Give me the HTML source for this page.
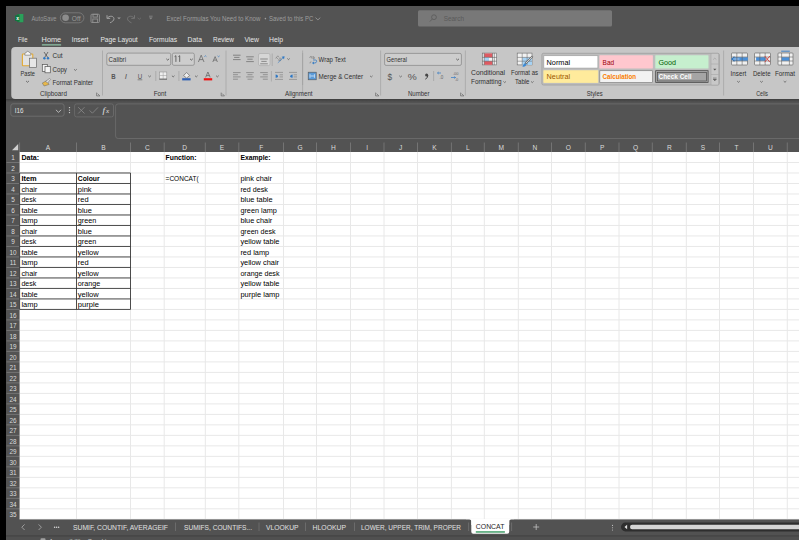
<!DOCTYPE html><html><head><meta charset="utf-8"><style>
*{margin:0;padding:0}
html,body{width:799px;height:540px;overflow:hidden;background:#000}
svg{position:absolute;left:0;top:0;font-family:"Liberation Sans",sans-serif}
</style></head><body>
<svg width="799" height="540" viewBox="0 0 799 540">
<rect x="0" y="0" width="799" height="540" fill="#000"/>
<rect x="6" y="6" width="793" height="534" fill="#535353"/>
<rect x="11.25" y="46.9" width="800" height="52.1" fill="#c6c6c6" rx="4"/>
<rect x="17" y="14" width="6.3" height="8.2" rx="0.8" fill="#1d7a44"/>
<rect x="15" y="15.2" width="5.2" height="5.8" rx="0.6" fill="#12753f"/>
<rect x="19.5" y="14" width="3.8" height="8.2" fill="#2aa05a"/>
<text x="16.2" y="20.3" font-size="5" fill="#fff" font-weight="bold" text-anchor="start">x</text>
<text x="31.5" y="21" font-size="6.3" fill="#9a9a9a" textLength="25" lengthAdjust="spacingAndGlyphs" text-anchor="start">AutoSave</text>
<rect x="60.3" y="12.8" width="23.6" height="10" fill="none" stroke="#7a7a7a" stroke-width="0.9" rx="5"/>
<circle cx="65.6" cy="17.8" r="3.3" fill="#8c8c8c"/>
<text x="71.8" y="21" font-size="6.9" fill="#9a9a9a" textLength="8.7" lengthAdjust="spacingAndGlyphs" text-anchor="start">Off</text>
<g fill="none" stroke="#8e8e8e" stroke-width="1"><rect x="91" y="14.3" width="8.4" height="8.2" rx="0.8"/><rect x="93" y="14.3" width="4.4" height="2.8"/><rect x="92.8" y="19" width="4.8" height="3.5"/></g>
<path d="M107 15.2 v3.2 h3.2 M107.3 18.2 C109 15.5 113.8 15.5 114 18.8 C114 20.5 112 22 110 22.8" fill="none" stroke="#a0a0a0" stroke-width="1"/>
<path d="M117.2 17.6 l1.8 1.6 l1.8 -1.6z" fill="#a0a0a0"/>
<path d="M134.5 15.2 v3.2 h-3.2 M134.2 18.2 C132.5 15.5 127.7 15.5 127.5 18.8 C127.5 20.5 129.5 22 131.5 22.8" fill="none" stroke="#747474" stroke-width="1"/>
<path d="M137.6 17.8 l1.7 1.5 l1.7 -1.5" fill="none" stroke="#747474" stroke-width="0.7"/>
<g stroke="#8a8a8a" stroke-width="0.8"><line x1="149" y1="16.2" x2="152.6" y2="16.2"/></g><path d="M149 17.6 h3.6 l-1.8 1.9z" fill="#8a8a8a"/>
<text x="166.4" y="21.2" font-size="6.5" fill="#9e9e9e" textLength="94" lengthAdjust="spacingAndGlyphs" text-anchor="start">Excel Formulas You Need to Know</text>
<circle cx="265.4" cy="18.6" r="0.8" fill="#9e9e9e"/>
<text x="269" y="21.2" font-size="6.5" fill="#9e9e9e" textLength="44.2" lengthAdjust="spacingAndGlyphs" text-anchor="start">Saved to this PC</text>
<path d="M315.5 17.6 l2.4 2.3 l2.4 -2.3" fill="none" stroke="#9e9e9e" stroke-width="0.8"/>
<rect x="418" y="10.3" width="194" height="16.3" fill="#787878" rx="1.5"/>
<g fill="none" stroke="#5c5c5c" stroke-width="0.9"><circle cx="434" cy="17.2" r="2.4"/><line x1="432.3" y1="19" x2="429.8" y2="21.6"/></g>
<text x="443.7" y="21" font-size="6.3" fill="#5a5a5a" textLength="20.3" lengthAdjust="spacingAndGlyphs" text-anchor="start">Search</text>
<text x="17.9" y="42" font-size="6.9" fill="#e6e6e6" textLength="9.6" lengthAdjust="spacingAndGlyphs" text-anchor="start">File</text>
<text x="41.6" y="42" font-size="6.9" fill="#e6e6e6" textLength="19.6" lengthAdjust="spacingAndGlyphs" text-anchor="start">Home</text>
<text x="71.8" y="42" font-size="6.9" fill="#e6e6e6" textLength="16.6" lengthAdjust="spacingAndGlyphs" text-anchor="start">Insert</text>
<text x="100.4" y="42" font-size="6.9" fill="#e6e6e6" textLength="37.3" lengthAdjust="spacingAndGlyphs" text-anchor="start">Page Layout</text>
<text x="149" y="42" font-size="6.9" fill="#e6e6e6" textLength="28" lengthAdjust="spacingAndGlyphs" text-anchor="start">Formulas</text>
<text x="187.6" y="42" font-size="6.9" fill="#e6e6e6" textLength="14.4" lengthAdjust="spacingAndGlyphs" text-anchor="start">Data</text>
<text x="213" y="42" font-size="6.9" fill="#e6e6e6" textLength="21" lengthAdjust="spacingAndGlyphs" text-anchor="start">Review</text>
<text x="244.4" y="42" font-size="6.9" fill="#e6e6e6" textLength="14.6" lengthAdjust="spacingAndGlyphs" text-anchor="start">View</text>
<text x="269" y="42" font-size="6.9" fill="#e6e6e6" textLength="14" lengthAdjust="spacingAndGlyphs" text-anchor="start">Help</text>
<rect x="41.8" y="44.2" width="19.4" height="1.3" fill="#8fc2a6" rx="0.6"/>
<line x1="102.5" y1="50.5" x2="102.5" y2="95.5" stroke="#a6a6a6" stroke-width="0.8"/>
<line x1="226" y1="50.5" x2="226" y2="95.5" stroke="#a6a6a6" stroke-width="0.8"/>
<line x1="302.6" y1="50.5" x2="302.6" y2="95.5" stroke="#a6a6a6" stroke-width="0.8"/>
<line x1="380.6" y1="50.5" x2="380.6" y2="95.5" stroke="#a6a6a6" stroke-width="0.8"/>
<line x1="465.4" y1="50.5" x2="465.4" y2="95.5" stroke="#a6a6a6" stroke-width="0.8"/>
<line x1="723.6" y1="50.5" x2="723.6" y2="95.5" stroke="#a6a6a6" stroke-width="0.8"/>
<rect x="22.4" y="54" width="10.4" height="11.8" rx="0.6" fill="#e2e2e2" stroke="#e2a935" stroke-width="1.1"/>
<path d="M24.8 55.2 v-1.8 l3 -2.2 l3 2.2 v1.8z" fill="#f4f4f4" stroke="#6a6a6a" stroke-width="0.6"/>
<rect x="29.6" y="58.2" width="6.8" height="9.4" fill="#e6e6e6" stroke="#6a6a6a" stroke-width="0.7"/>
<text x="20.6" y="75.6" font-size="6.6" fill="#303030" textLength="14.4" lengthAdjust="spacingAndGlyphs" text-anchor="start">Paste</text>
<path d="M26 80.9 l1.5 1.4 l1.5 -1.4" fill="none" stroke="#555" stroke-width="0.75"/>
<g fill="none" stroke="#444" stroke-width="0.7"><line x1="44" y1="52" x2="47.8" y2="57.5"/><line x1="48" y1="52" x2="44.6" y2="57.5"/></g><circle cx="44.4" cy="58.3" r="1.2" fill="#2f78c4"/><circle cx="48" cy="58.3" r="1.2" fill="#2f78c4"/>
<text x="52.5" y="58.2" font-size="6.6" fill="#303030" textLength="10" lengthAdjust="spacingAndGlyphs" text-anchor="start">Cut</text>
<g fill="#f4f4f4" stroke="#555" stroke-width="0.7"><rect x="42.3" y="64.6" width="5" height="6.8"/><rect x="45" y="66.6" width="5.3" height="6.2"/></g>
<text x="52.5" y="71.6" font-size="6.6" fill="#303030" textLength="14.4" lengthAdjust="spacingAndGlyphs" text-anchor="start">Copy</text>
<path d="M74 69.2 l1.4 1.3 l1.4 -1.3" fill="none" stroke="#555" stroke-width="0.7"/>
<path d="M42.3 83 l4.3 -2.2 l2.5 3.6 l-5 1.6z" fill="#e8b84a" stroke="#666" stroke-width="0.5"/><path d="M45.6 81.4 l4 -3 l1 1 l-3 3.6z" fill="#ddd" stroke="#666" stroke-width="0.5"/>
<text x="52.5" y="85.2" font-size="6.6" fill="#303030" textLength="40.6" lengthAdjust="spacingAndGlyphs" text-anchor="start">Format Painter</text>
<text x="40" y="96.3" font-size="6.5" fill="#333333" textLength="26.9" lengthAdjust="spacingAndGlyphs" text-anchor="start">Clipboard</text>
<path d="M96.6 92.6 v3.3 h3.3 M97.6 93.6 l2.2 2.2" fill="none" stroke="#555" stroke-width="0.6"/>
<rect x="106.8" y="53.1" width="63.9" height="12.2" fill="#cdcdcd" stroke="#8c8c8c" stroke-width="0.8" rx="1.5"/>
<text x="108.6" y="61.8" font-size="6.5" fill="#333" textLength="17.4" lengthAdjust="spacingAndGlyphs" text-anchor="start">Calibri</text>
<path d="M166.3 58.8 l1.4 1.3 l1.4 -1.3" fill="none" stroke="#444" stroke-width="0.75"/>
<rect x="172.4" y="53.1" width="21.9" height="12.2" fill="#cdcdcd" stroke="#8c8c8c" stroke-width="0.8" rx="1.5"/>
<path d="M174.6 56.6 l1.3 -0.9 v6.2 M178.4 56.6 l1.3 -0.9 v6.2" fill="none" stroke="#3a3a3a" stroke-width="0.7"/>
<path d="M190 58.8 l1.4 1.3 l1.4 -1.3" fill="none" stroke="#444" stroke-width="0.75"/>
<path d="M198.4 62 l2.8 -6.8 l2.8 6.8 M199.5 59.6 h3.4" fill="none" stroke="#555" stroke-width="0.65"/>
<path d="M204.4 56.6 l1 -0.8 l1 0.8" fill="none" stroke="#2f78c4" stroke-width="0.7"/>
<path d="M212.8 62 l2.3 -5.4 l2.3 5.4 M213.7 60.1 h2.8" fill="none" stroke="#555" stroke-width="0.65"/>
<path d="M217.6 55.9 l1 0.8 l1 -0.8" fill="none" stroke="#2f78c4" stroke-width="0.7"/>
<text x="111.2" y="79" font-size="6.8" fill="#555" font-weight="bold" textLength="4.4" lengthAdjust="spacingAndGlyphs" text-anchor="start">B</text>
<text x="124.8" y="79" font-size="6.8" fill="#555" textLength="2.2" lengthAdjust="spacingAndGlyphs" text-anchor="start" font-style="italic">I</text>
<text x="137.7" y="78.5" font-size="6.8" fill="#555" textLength="4.5" lengthAdjust="spacingAndGlyphs" text-anchor="start">U</text>
<line x1="137.6" y1="79.8" x2="142.3" y2="79.8" stroke="#555" stroke-width="0.6"/>
<path d="M148.29999999999998 75.7 l1.3 1.2 l1.3 -1.2" fill="none" stroke="#555" stroke-width="0.75"/>
<path d="M171.89999999999998 75.7 l1.3 1.2 l1.3 -1.2" fill="none" stroke="#555" stroke-width="0.75"/>
<path d="M195.0 75.7 l1.3 1.2 l1.3 -1.2" fill="none" stroke="#555" stroke-width="0.75"/>
<path d="M216.1 75.7 l1.3 1.2 l1.3 -1.2" fill="none" stroke="#555" stroke-width="0.75"/>
<line x1="155.8" y1="71" x2="155.8" y2="81" stroke="#a0a0a0" stroke-width="0.7"/>
<line x1="178.9" y1="71" x2="178.9" y2="81" stroke="#a0a0a0" stroke-width="0.7"/>
<g fill="#eee" stroke="#888" stroke-width="0.5"><rect x="159.6" y="72" width="7.2" height="7"/></g><line x1="163.2" y1="72" x2="163.2" y2="79" stroke="#999" stroke-width="0.5"/><line x1="159.6" y1="75.5" x2="166.8" y2="75.5" stroke="#999" stroke-width="0.5"/><line x1="159.4" y1="79.2" x2="167" y2="79.2" stroke="#555" stroke-width="0.8"/>
<path d="M183.6 75.5 l3 -3 l3 3 l-3 2.6z" fill="#eee" stroke="#555" stroke-width="0.6"/><rect x="182.2" y="78.2" width="8.4" height="2.2" fill="#2e5fb4"/>
<path d="M205.6 77.4 l2.3 -5.4 l2.3 5.4 M206.5 75.6 h2.8" fill="none" stroke="#555" stroke-width="0.65"/>
<rect x="203.8" y="78.2" width="8.4" height="2.2" fill="#f01010"/>
<text x="153.7" y="96.3" font-size="6.5" fill="#333333" textLength="12.6" lengthAdjust="spacingAndGlyphs" text-anchor="start">Font</text>
<path d="M221.2 92.6 v3.3 h3.3 M222.2 93.6 l2.2 2.2" fill="none" stroke="#555" stroke-width="0.6"/>
<line x1="233.0" y1="55.2" x2="240.6" y2="55.2" stroke="#555" stroke-width="0.6"/><line x1="234.14" y1="57.4" x2="239.45999999999998" y2="57.4" stroke="#555" stroke-width="0.6"/><line x1="233.0" y1="59.6" x2="240.6" y2="59.6" stroke="#555" stroke-width="0.6"/>
<line x1="246.2" y1="56.8" x2="253.79999999999998" y2="56.8" stroke="#555" stroke-width="0.6"/><line x1="247.33999999999997" y1="59.2" x2="252.65999999999997" y2="59.2" stroke="#555" stroke-width="0.6"/><line x1="246.2" y1="61.6" x2="253.79999999999998" y2="61.6" stroke="#555" stroke-width="0.6"/>
<rect x="258.5" y="53.5" width="11.5" height="12.1" fill="#d6d6d6" stroke="#a8a8a8" stroke-width="0.6" rx="1.5"/>
<line x1="260.2" y1="59" x2="267.8" y2="59" stroke="#555" stroke-width="0.6"/><line x1="261.34" y1="61.4" x2="266.65999999999997" y2="61.4" stroke="#555" stroke-width="0.6"/><line x1="260.2" y1="63.8" x2="267.8" y2="63.8" stroke="#555" stroke-width="0.6"/>
<line x1="272.2" y1="53.5" x2="272.2" y2="66" stroke="#a0a0a0" stroke-width="0.7"/>
<g fill="none" stroke="#707070" stroke-width="0.55"><path d="M275.6 58.4 l2.2 -2.6 l1.2 1.6 M276.3 57.6 l1.6 1.2"/><path d="M278.4 60.2 l2 -2.4 q1 0.6 0.2 1.4 q1 0.6 -0.2 1.6z"/></g><path d="M277.9 62.8 l5.6 -5.4" stroke="#2f78c4" stroke-width="0.9" stroke-dasharray="1 0.4"/><path d="M284.6 56.2 l-3 0.6 l2.4 2.4z" fill="#2f78c4"/>
<path d="M287.3 58.5 l1.2 1.1 l1.2 -1.1" fill="none" stroke="#555" stroke-width="0.75"/>
<line x1="233" y1="72.6" x2="240.6" y2="72.6" stroke="#7a7a7a" stroke-width="0.7"/><line x1="233" y1="74.7" x2="237.94" y2="74.7" stroke="#7a7a7a" stroke-width="0.7"/><line x1="233" y1="76.9" x2="240.6" y2="76.9" stroke="#7a7a7a" stroke-width="0.7"/><line x1="233" y1="79.2" x2="237.94" y2="79.2" stroke="#7a7a7a" stroke-width="0.7"/>
<line x1="246.2" y1="72.6" x2="253.79999999999998" y2="72.6" stroke="#7a7a7a" stroke-width="0.7"/><line x1="247.53" y1="74.7" x2="252.47" y2="74.7" stroke="#7a7a7a" stroke-width="0.7"/><line x1="246.2" y1="76.9" x2="253.79999999999998" y2="76.9" stroke="#7a7a7a" stroke-width="0.7"/><line x1="247.53" y1="79.2" x2="252.47" y2="79.2" stroke="#7a7a7a" stroke-width="0.7"/>
<line x1="260.2" y1="72.6" x2="267.8" y2="72.6" stroke="#7a7a7a" stroke-width="0.7"/><line x1="262.86" y1="74.7" x2="267.8" y2="74.7" stroke="#7a7a7a" stroke-width="0.7"/><line x1="260.2" y1="76.9" x2="267.8" y2="76.9" stroke="#7a7a7a" stroke-width="0.7"/><line x1="262.86" y1="79.2" x2="267.8" y2="79.2" stroke="#7a7a7a" stroke-width="0.7"/>
<line x1="271.4" y1="71" x2="271.4" y2="81.5" stroke="#a0a0a0" stroke-width="0.7"/>
<g stroke="#8a8a8a" stroke-width="0.75"><line x1="275" y1="72.4" x2="283" y2="72.4"/><line x1="279.6" y1="74.8" x2="283" y2="74.8"/><line x1="279.6" y1="76.9" x2="283" y2="76.9"/><line x1="275" y1="79.4" x2="283" y2="79.4"/></g><path d="M275.6 74.6 q2.4 0 2.4 1.6 q0 1.6 -2.4 1.6z" fill="#2f78c4"/>
<g stroke="#8a8a8a" stroke-width="0.75"><line x1="289" y1="72.4" x2="297" y2="72.4"/><line x1="293.6" y1="74.8" x2="297" y2="74.8"/><line x1="293.6" y1="76.9" x2="297" y2="76.9"/><line x1="289" y1="79.4" x2="297" y2="79.4"/></g><path d="M292.6 74.6 q-2.4 0 -2.4 1.6 q0 1.6 2.4 1.6z" fill="#2f78c4"/>
<line x1="302.6" y1="53" x2="302.6" y2="85" stroke="#a0a0a0" stroke-width="0.7"/>
<g fill="none" stroke="#707070" stroke-width="0.55"><path d="M309.6 58 q0.6 -2.2 1.8 -1.6 v2 M313 56 v3 q1.6 0 1.6 -1.2 q0 -1 -1.6 -0.8"/><path d="M311.4 61.8 q-1.6 -0.3 -1.4 1.6"/></g><path d="M313.2 60 h2.2 q1.4 0 1.2 1.6 q-0.2 1.4 -2 1.4 h-1.4" fill="none" stroke="#2f78c4" stroke-width="0.8"/><path d="M312 63 l1.8 -1.6 v3.2z" fill="#2f78c4"/>
<text x="318.6" y="61.5" font-size="6.6" fill="#303030" textLength="27" lengthAdjust="spacingAndGlyphs" text-anchor="start">Wrap Text</text>
<rect x="308.2" y="72.2" width="8" height="7.6" fill="#5a9ad8" stroke="#555" stroke-width="0.6"/><path d="M310 74.2 v3.6 M314.4 74.2 v3.6 M310.6 76 h3.2" stroke="#f0f6fc" stroke-width="0.7"/>
<text x="318.6" y="78.7" font-size="6.6" fill="#303030" textLength="44.4" lengthAdjust="spacingAndGlyphs" text-anchor="start">Merge &amp; Center</text>
<path d="M370 75.8 l1.3 1.2 l1.3 -1.2" fill="none" stroke="#555" stroke-width="0.7"/>
<text x="285" y="96.3" font-size="6.5" fill="#333333" textLength="27.6" lengthAdjust="spacingAndGlyphs" text-anchor="start">Alignment</text>
<path d="M375.6 92.6 v3.3 h3.3 M376.6 93.6 l2.2 2.2" fill="none" stroke="#555" stroke-width="0.6"/>
<rect x="384.6" y="53.4" width="76.8" height="12" fill="#cdcdcd" stroke="#8c8c8c" stroke-width="0.8" rx="1.5"/>
<text x="386.5" y="61.9" font-size="6.5" fill="#333" textLength="20.5" lengthAdjust="spacingAndGlyphs" text-anchor="start">General</text>
<path d="M456.2 58.8 l1.4 1.3 l1.4 -1.3" fill="none" stroke="#444" stroke-width="0.75"/>
<text x="387.6" y="79.6" font-size="8.6" fill="#555" textLength="4.6" lengthAdjust="spacingAndGlyphs" text-anchor="start">$</text>
<path d="M399.3 75.8 l1.3 1.2 l1.3 -1.2" fill="none" stroke="#555" stroke-width="0.75"/>
<text x="407.8" y="79.8" font-size="8.8" fill="#555" textLength="9" lengthAdjust="spacingAndGlyphs" text-anchor="start">%</text>
<circle cx="426.6" cy="75" r="1.5" fill="#444"/><path d="M427.9 75.2 q0 2.8 -2.6 4" fill="none" stroke="#444" stroke-width="1"/>
<line x1="433.6" y1="71" x2="433.6" y2="81" stroke="#a0a0a0" stroke-width="0.7"/>
<text x="439.5" y="79" font-size="4.5" fill="#666">.0</text><path d="M441 73 h-3.5 m1.2 -1 l-1.2 1 l1.2 1" fill="none" stroke="#2f78c4" stroke-width="0.7"/>
<text x="453" y="75" font-size="4" fill="#666">.00</text><path d="M451 77.5 h4.5 m-1.2 -1 l1.2 1 l-1.2 1" fill="none" stroke="#2f78c4" stroke-width="0.7"/><text x="455" y="80.5" font-size="4" fill="#666">.0</text>
<text x="408" y="96.3" font-size="6.5" fill="#333333" textLength="21.4" lengthAdjust="spacingAndGlyphs" text-anchor="start">Number</text>
<path d="M460.6 92.6 v3.3 h3.3 M461.6 93.6 l2.2 2.2" fill="none" stroke="#555" stroke-width="0.6"/>
<rect x="482.3" y="53.1" width="14.4" height="11.8" fill="#f2f2f2" stroke="#6a6a6a" stroke-width="0.6"/>
<rect x="484.2" y="53.4" width="8.2" height="4" fill="#de5a62"/><rect x="484.2" y="57.4" width="4.8" height="3.8" fill="#a6d3f5"/><rect x="484.2" y="61.2" width="8.2" height="3.6" fill="#de5a62"/>
<g stroke="#5a5a5a" stroke-width="0.55"><line x1="482.3" y1="57.4" x2="496.7" y2="57.4"/><line x1="482.3" y1="61.2" x2="496.7" y2="61.2"/><line x1="484.2" y1="53.1" x2="484.2" y2="64.9"/><line x1="492.5" y1="53.1" x2="492.5" y2="64.9"/><line x1="494.3" y1="53.1" x2="494.3" y2="64.9"/></g>
<text x="471" y="75" font-size="6.6" fill="#303030" textLength="34" lengthAdjust="spacingAndGlyphs" text-anchor="start">Conditional</text>
<text x="471" y="83.6" font-size="6.6" fill="#303030" textLength="30.5" lengthAdjust="spacingAndGlyphs" text-anchor="start">Formatting</text>
<path d="M503.4 81.4 l1.3 1.2 l1.3 -1.2" fill="none" stroke="#555" stroke-width="0.7"/>
<rect x="517.2" y="53.1" width="14.8" height="11.8" fill="#f2f2f2" stroke="#6a6a6a" stroke-width="0.6"/>
<rect x="522.2" y="57.4" width="9.8" height="7.5" fill="#a6d3f5"/>
<g stroke="#6a6a6a" stroke-width="0.55"><line x1="517.2" y1="57.4" x2="532" y2="57.4"/><line x1="517.2" y1="61.2" x2="532" y2="61.2"/><line x1="522.2" y1="53.1" x2="522.2" y2="64.9"/><line x1="527.1" y1="53.1" x2="527.1" y2="64.9"/></g>
<path d="M525.5 63.5 l6.8 -6.8" stroke="#6a6a6a" stroke-width="1.8" stroke-linecap="round"/><path d="M525.8 63.2 l6.5 -6.5" stroke="#e8e8e8" stroke-width="0.8"/><path d="M522.4 66.8 q0.5 -3 3 -3.6 l1 1 q-0.6 2.6 -4 2.6z" fill="#3b8ad6"/>
<text x="511" y="75" font-size="6.6" fill="#303030" textLength="27" lengthAdjust="spacingAndGlyphs" text-anchor="start">Format as</text>
<text x="515" y="83.6" font-size="6.6" fill="#303030" textLength="14.5" lengthAdjust="spacingAndGlyphs" text-anchor="start">Table</text>
<path d="M531 81.4 l1.3 1.2 l1.3 -1.2" fill="none" stroke="#555" stroke-width="0.7"/>
<rect x="541.9" y="53.3" width="177.4" height="31.7" fill="#bdbdbd" stroke="#9a9a9a" stroke-width="0.7" rx="1.5"/>
<rect x="543.8" y="55.7" width="54.1" height="12.4" fill="#ffffff" stroke="#a0a0a0" stroke-width="0.7"/>
<rect x="599.8" y="55.7" width="52.8" height="12.4" fill="#ffc7ce" stroke="#ffc7ce" stroke-width="0.7"/>
<rect x="655.7" y="55.7" width="52.4" height="12.4" fill="#c6efce" stroke="#c6efce" stroke-width="0.7"/>
<rect x="543.8" y="70.7" width="54.1" height="11.9" fill="#ffeb9c" stroke="#ffeb9c" stroke-width="0.7"/>
<rect x="599.8" y="70.7" width="52.8" height="11.9" fill="#f2f2f2" stroke="#7f7f7f" stroke-width="0.7"/>
<rect x="655.7" y="70.7" width="52.4" height="11.9" fill="#a5a5a5" stroke="#3f3f3f" stroke-width="0.7"/>
<text x="546.5999999999999" y="64.7" font-size="6.8" fill="#000" textLength="23.5" lengthAdjust="spacingAndGlyphs" text-anchor="start">Normal</text>
<text x="602.5999999999999" y="64.7" font-size="6.8" fill="#9c0006" textLength="11.5" lengthAdjust="spacingAndGlyphs" text-anchor="start">Bad</text>
<text x="658.5" y="64.7" font-size="6.8" fill="#006100" textLength="17.5" lengthAdjust="spacingAndGlyphs" text-anchor="start">Good</text>
<text x="546.5999999999999" y="79.2" font-size="6.8" fill="#9c5700" textLength="23.5" lengthAdjust="spacingAndGlyphs" text-anchor="start">Neutral</text>
<text x="602.5999999999999" y="79.2" font-size="6.8" fill="#fa7d00" font-weight="bold" textLength="33.5" lengthAdjust="spacingAndGlyphs" text-anchor="start">Calculation</text>
<text x="658.5" y="79.2" font-size="6.8" fill="#ffffff" font-weight="bold" textLength="33" lengthAdjust="spacingAndGlyphs" text-anchor="start">Check Cell</text>
<rect x="657.3" y="72.3" width="49.2" height="8.7" fill="none" stroke="#3f3f3f" stroke-width="0.6"/>
<rect x="711" y="53.4" width="7.6" height="31.6" fill="#c8c8c8" stroke="#a0a0a0" stroke-width="0.5" rx="1"/>
<line x1="711" y1="64" x2="718.6" y2="64" stroke="#a0a0a0" stroke-width="0.5"/>
<line x1="711" y1="74.5" x2="718.6" y2="74.5" stroke="#a0a0a0" stroke-width="0.5"/>
<path d="M713.2 59.6 l1.6 -1.5 l1.6 1.5" fill="none" stroke="#999" stroke-width="0.6"/><path d="M713.2 68.8 h3.2 l-1.6 1.6z" fill="#555"/><path d="M713 78 h3.6 M713.2 79.2 h3.2 l-1.6 1.6z" stroke="#555" stroke-width="0.5" fill="#555"/>
<text x="586.7" y="96.3" font-size="6.5" fill="#333333" textLength="15.9" lengthAdjust="spacingAndGlyphs" text-anchor="start">Styles</text>
<rect x="731.5" y="53" width="16" height="12" fill="#f0f0f0" stroke="#5a5a5a" stroke-width="0.6" rx="0.8"/><rect x="734.0" y="57.2" width="13.8" height="3.6" fill="#4a90d9"/><path d="M731.0 59 l3.4 -3 v6z" fill="#2f78c4"/><line x1="733.0" y1="59" x2="739.5" y2="59" stroke="#d8e8f8" stroke-width="0.7"/><g stroke="#5a5a5a" stroke-width="0.55"><line x1="731.5" y1="57" x2="747.5" y2="57"/><line x1="731.5" y1="61" x2="747.5" y2="61"/><line x1="736.8333333333334" y1="53" x2="736.8333333333334" y2="65"/><line x1="742.1666666666666" y1="53" x2="742.1666666666666" y2="65"/></g>
<rect x="754.5" y="53" width="16" height="12" fill="#f0f0f0" stroke="#5a5a5a" stroke-width="0.6" rx="0.8"/><rect x="756.1" y="57.2" width="9.5" height="3.6" fill="#4a90d9"/><g stroke="#5a5a5a" stroke-width="0.55"><line x1="754.5" y1="57" x2="770.5" y2="57"/><line x1="754.5" y1="61" x2="770.5" y2="61"/><line x1="759.8333333333334" y1="53" x2="759.8333333333334" y2="65"/><line x1="765.1666666666666" y1="53" x2="765.1666666666666" y2="65"/></g><path d="M764.7 56 l5.2 6.2 M769.9 56 l-5.2 6.2" stroke="#d04040" stroke-width="0.9"/>
<rect x="778" y="53" width="15" height="12" fill="#f0f0f0" stroke="#5a5a5a" stroke-width="0.6" rx="0.8"/><rect x="781.6" y="57.2" width="7.8" height="3.6" fill="#4a90d9"/><line x1="781.2" y1="51.2" x2="789.8" y2="51.2" stroke="#2f78c4" stroke-width="0.9"/><g stroke="#5a5a5a" stroke-width="0.55"><line x1="778" y1="57" x2="793" y2="57"/><line x1="778" y1="61" x2="793" y2="61"/><line x1="781.6" y1="53" x2="781.6" y2="65"/><line x1="789.4" y1="53" x2="789.4" y2="65"/></g>
<text x="730.6" y="75.5" font-size="6.6" fill="#303030" textLength="15.6" lengthAdjust="spacingAndGlyphs" text-anchor="start">Insert</text>
<text x="753" y="75.5" font-size="6.6" fill="#303030" textLength="17.5" lengthAdjust="spacingAndGlyphs" text-anchor="start">Delete</text>
<text x="775" y="75.5" font-size="6.6" fill="#303030" textLength="20" lengthAdjust="spacingAndGlyphs" text-anchor="start">Format</text>
<path d="M737.2 81.1 l1.3 1.2 l1.3 -1.2" fill="none" stroke="#555" stroke-width="0.75"/>
<path d="M760.2 81.1 l1.3 1.2 l1.3 -1.2" fill="none" stroke="#555" stroke-width="0.75"/>
<path d="M783.7 81.1 l1.3 1.2 l1.3 -1.2" fill="none" stroke="#555" stroke-width="0.75"/>
<text x="756.2" y="96.3" font-size="6.5" fill="#333333" textLength="11.8" lengthAdjust="spacingAndGlyphs" text-anchor="start">Cells</text>
<defs><linearGradient id="sh" x1="0" y1="0" x2="0" y2="1"><stop offset="0" stop-color="#3e3e3e"/><stop offset="1" stop-color="#535353"/></linearGradient></defs>
<rect x="6" y="99" width="793" height="3.2" fill="url(#sh)"/>
<rect x="10.8" y="103.8" width="53.3" height="12.4" fill="none" stroke="#6f6f6f" stroke-width="0.9" rx="2.2"/>
<text x="14.8" y="112.6" font-size="6.3" fill="#e0e0e0" textLength="8.8" lengthAdjust="spacingAndGlyphs" text-anchor="start">I16</text>
<path d="M55.9 109.8 l2.6 2.6 l2.6 -2.6" fill="none" stroke="#cfcfcf" stroke-width="0.8"/>
<circle cx="69.5" cy="107.6" r="0.7" fill="#dadada"/>
<circle cx="69.5" cy="110.1" r="0.7" fill="#dadada"/>
<circle cx="69.5" cy="112.6" r="0.7" fill="#dadada"/>
<rect x="74.6" y="103.9" width="38.9" height="13" fill="none" stroke="#6f6f6f" stroke-width="0.8" rx="2"/>
<path d="M78.2 107.2 l6.3 6.3 M84.5 107.2 l-6.3 6.3" stroke="#8a8a8a" stroke-width="0.8"/><path d="M89.6 110.4 l2.8 2.8 l5.6 -5.8" fill="none" stroke="#8a8a8a" stroke-width="0.8"/>
<text x="102.6" y="113.2" font-size="9.2" fill="#e6e6e6" font-family="Liberation Serif" font-style="italic">f</text><text x="106" y="113.2" font-size="7" fill="#e6e6e6" font-family="Liberation Serif" font-style="italic">x</text>
<rect x="115.6" y="103.9" width="700" height="34.6" fill="none" stroke="#6f6f6f" stroke-width="0.8" rx="2.5"/>
<rect x="19.6" y="152.0" width="780.4" height="367.325" fill="#ffffff"/>
<line x1="19.6" y1="162.495" x2="800" y2="162.495" stroke="#e8e8e8" stroke-width="1"/>
<line x1="19.6" y1="172.99" x2="800" y2="172.99" stroke="#e8e8e8" stroke-width="1"/>
<line x1="19.6" y1="183.485" x2="800" y2="183.485" stroke="#e8e8e8" stroke-width="1"/>
<line x1="19.6" y1="193.98" x2="800" y2="193.98" stroke="#e8e8e8" stroke-width="1"/>
<line x1="19.6" y1="204.475" x2="800" y2="204.475" stroke="#e8e8e8" stroke-width="1"/>
<line x1="19.6" y1="214.97" x2="800" y2="214.97" stroke="#e8e8e8" stroke-width="1"/>
<line x1="19.6" y1="225.46499999999997" x2="800" y2="225.46499999999997" stroke="#e8e8e8" stroke-width="1"/>
<line x1="19.6" y1="235.95999999999998" x2="800" y2="235.95999999999998" stroke="#e8e8e8" stroke-width="1"/>
<line x1="19.6" y1="246.45499999999998" x2="800" y2="246.45499999999998" stroke="#e8e8e8" stroke-width="1"/>
<line x1="19.6" y1="256.95" x2="800" y2="256.95" stroke="#e8e8e8" stroke-width="1"/>
<line x1="19.6" y1="267.445" x2="800" y2="267.445" stroke="#e8e8e8" stroke-width="1"/>
<line x1="19.6" y1="277.94" x2="800" y2="277.94" stroke="#e8e8e8" stroke-width="1"/>
<line x1="19.6" y1="288.435" x2="800" y2="288.435" stroke="#e8e8e8" stroke-width="1"/>
<line x1="19.6" y1="298.92999999999995" x2="800" y2="298.92999999999995" stroke="#e8e8e8" stroke-width="1"/>
<line x1="19.6" y1="309.42499999999995" x2="800" y2="309.42499999999995" stroke="#e8e8e8" stroke-width="1"/>
<line x1="19.6" y1="319.91999999999996" x2="800" y2="319.91999999999996" stroke="#e8e8e8" stroke-width="1"/>
<line x1="19.6" y1="330.41499999999996" x2="800" y2="330.41499999999996" stroke="#e8e8e8" stroke-width="1"/>
<line x1="19.6" y1="340.90999999999997" x2="800" y2="340.90999999999997" stroke="#e8e8e8" stroke-width="1"/>
<line x1="19.6" y1="351.405" x2="800" y2="351.405" stroke="#e8e8e8" stroke-width="1"/>
<line x1="19.6" y1="361.9" x2="800" y2="361.9" stroke="#e8e8e8" stroke-width="1"/>
<line x1="19.6" y1="372.395" x2="800" y2="372.395" stroke="#e8e8e8" stroke-width="1"/>
<line x1="19.6" y1="382.89" x2="800" y2="382.89" stroke="#e8e8e8" stroke-width="1"/>
<line x1="19.6" y1="393.385" x2="800" y2="393.385" stroke="#e8e8e8" stroke-width="1"/>
<line x1="19.6" y1="403.88" x2="800" y2="403.88" stroke="#e8e8e8" stroke-width="1"/>
<line x1="19.6" y1="414.375" x2="800" y2="414.375" stroke="#e8e8e8" stroke-width="1"/>
<line x1="19.6" y1="424.87" x2="800" y2="424.87" stroke="#e8e8e8" stroke-width="1"/>
<line x1="19.6" y1="435.36499999999995" x2="800" y2="435.36499999999995" stroke="#e8e8e8" stroke-width="1"/>
<line x1="19.6" y1="445.85999999999996" x2="800" y2="445.85999999999996" stroke="#e8e8e8" stroke-width="1"/>
<line x1="19.6" y1="456.35499999999996" x2="800" y2="456.35499999999996" stroke="#e8e8e8" stroke-width="1"/>
<line x1="19.6" y1="466.84999999999997" x2="800" y2="466.84999999999997" stroke="#e8e8e8" stroke-width="1"/>
<line x1="19.6" y1="477.34499999999997" x2="800" y2="477.34499999999997" stroke="#e8e8e8" stroke-width="1"/>
<line x1="19.6" y1="487.84" x2="800" y2="487.84" stroke="#e8e8e8" stroke-width="1"/>
<line x1="19.6" y1="498.335" x2="800" y2="498.335" stroke="#e8e8e8" stroke-width="1"/>
<line x1="19.6" y1="508.83" x2="800" y2="508.83" stroke="#e8e8e8" stroke-width="1"/>
<line x1="19.6" y1="519.325" x2="800" y2="519.325" stroke="#e8e8e8" stroke-width="1"/>
<line x1="76.5" y1="152.0" x2="76.5" y2="519.325" stroke="#e8e8e8" stroke-width="1"/>
<line x1="130.5" y1="152.0" x2="130.5" y2="519.325" stroke="#e8e8e8" stroke-width="1"/>
<line x1="164.2" y1="152.0" x2="164.2" y2="519.325" stroke="#e8e8e8" stroke-width="1"/>
<line x1="205.3" y1="152.0" x2="205.3" y2="519.325" stroke="#e8e8e8" stroke-width="1"/>
<line x1="238.8" y1="152.0" x2="238.8" y2="519.325" stroke="#e8e8e8" stroke-width="1"/>
<line x1="283.5" y1="152.0" x2="283.5" y2="519.325" stroke="#e8e8e8" stroke-width="1"/>
<line x1="316.5" y1="152.0" x2="316.5" y2="519.325" stroke="#e8e8e8" stroke-width="1"/>
<line x1="350.5" y1="152.0" x2="350.5" y2="519.325" stroke="#e8e8e8" stroke-width="1"/>
<line x1="384" y1="152.0" x2="384" y2="519.325" stroke="#e8e8e8" stroke-width="1"/>
<line x1="417.5" y1="152.0" x2="417.5" y2="519.325" stroke="#e8e8e8" stroke-width="1"/>
<line x1="451.4" y1="152.0" x2="451.4" y2="519.325" stroke="#e8e8e8" stroke-width="1"/>
<line x1="484.3" y1="152.0" x2="484.3" y2="519.325" stroke="#e8e8e8" stroke-width="1"/>
<line x1="518.3" y1="152.0" x2="518.3" y2="519.325" stroke="#e8e8e8" stroke-width="1"/>
<line x1="551.5" y1="152.0" x2="551.5" y2="519.325" stroke="#e8e8e8" stroke-width="1"/>
<line x1="585.3" y1="152.0" x2="585.3" y2="519.325" stroke="#e8e8e8" stroke-width="1"/>
<line x1="619" y1="152.0" x2="619" y2="519.325" stroke="#e8e8e8" stroke-width="1"/>
<line x1="652.3" y1="152.0" x2="652.3" y2="519.325" stroke="#e8e8e8" stroke-width="1"/>
<line x1="686.3" y1="152.0" x2="686.3" y2="519.325" stroke="#e8e8e8" stroke-width="1"/>
<line x1="719.5" y1="152.0" x2="719.5" y2="519.325" stroke="#e8e8e8" stroke-width="1"/>
<line x1="753.5" y1="152.0" x2="753.5" y2="519.325" stroke="#e8e8e8" stroke-width="1"/>
<line x1="787.25" y1="152.0" x2="787.25" y2="519.325" stroke="#e8e8e8" stroke-width="1"/>
<line x1="821" y1="152.0" x2="821" y2="519.325" stroke="#e8e8e8" stroke-width="1"/>
<line x1="19.6" y1="142.5" x2="19.6" y2="152" stroke="#7c7c7c" stroke-width="0.8"/>
<line x1="76.5" y1="142.5" x2="76.5" y2="152" stroke="#7c7c7c" stroke-width="0.8"/>
<line x1="130.5" y1="142.5" x2="130.5" y2="152" stroke="#7c7c7c" stroke-width="0.8"/>
<line x1="164.2" y1="142.5" x2="164.2" y2="152" stroke="#7c7c7c" stroke-width="0.8"/>
<line x1="205.3" y1="142.5" x2="205.3" y2="152" stroke="#7c7c7c" stroke-width="0.8"/>
<line x1="238.8" y1="142.5" x2="238.8" y2="152" stroke="#7c7c7c" stroke-width="0.8"/>
<line x1="283.5" y1="142.5" x2="283.5" y2="152" stroke="#7c7c7c" stroke-width="0.8"/>
<line x1="316.5" y1="142.5" x2="316.5" y2="152" stroke="#7c7c7c" stroke-width="0.8"/>
<line x1="350.5" y1="142.5" x2="350.5" y2="152" stroke="#7c7c7c" stroke-width="0.8"/>
<line x1="384" y1="142.5" x2="384" y2="152" stroke="#7c7c7c" stroke-width="0.8"/>
<line x1="417.5" y1="142.5" x2="417.5" y2="152" stroke="#7c7c7c" stroke-width="0.8"/>
<line x1="451.4" y1="142.5" x2="451.4" y2="152" stroke="#7c7c7c" stroke-width="0.8"/>
<line x1="484.3" y1="142.5" x2="484.3" y2="152" stroke="#7c7c7c" stroke-width="0.8"/>
<line x1="518.3" y1="142.5" x2="518.3" y2="152" stroke="#7c7c7c" stroke-width="0.8"/>
<line x1="551.5" y1="142.5" x2="551.5" y2="152" stroke="#7c7c7c" stroke-width="0.8"/>
<line x1="585.3" y1="142.5" x2="585.3" y2="152" stroke="#7c7c7c" stroke-width="0.8"/>
<line x1="619" y1="142.5" x2="619" y2="152" stroke="#7c7c7c" stroke-width="0.8"/>
<line x1="652.3" y1="142.5" x2="652.3" y2="152" stroke="#7c7c7c" stroke-width="0.8"/>
<line x1="686.3" y1="142.5" x2="686.3" y2="152" stroke="#7c7c7c" stroke-width="0.8"/>
<line x1="719.5" y1="142.5" x2="719.5" y2="152" stroke="#7c7c7c" stroke-width="0.8"/>
<line x1="753.5" y1="142.5" x2="753.5" y2="152" stroke="#7c7c7c" stroke-width="0.8"/>
<line x1="787.25" y1="142.5" x2="787.25" y2="152" stroke="#7c7c7c" stroke-width="0.8"/>
<line x1="821" y1="142.5" x2="821" y2="152" stroke="#7c7c7c" stroke-width="0.8"/>
<line x1="6.5" y1="162.495" x2="19.5" y2="162.495" stroke="#7c7c7c" stroke-width="0.8"/>
<line x1="6.5" y1="172.99" x2="19.5" y2="172.99" stroke="#7c7c7c" stroke-width="0.8"/>
<line x1="6.5" y1="183.485" x2="19.5" y2="183.485" stroke="#7c7c7c" stroke-width="0.8"/>
<line x1="6.5" y1="193.98" x2="19.5" y2="193.98" stroke="#7c7c7c" stroke-width="0.8"/>
<line x1="6.5" y1="204.475" x2="19.5" y2="204.475" stroke="#7c7c7c" stroke-width="0.8"/>
<line x1="6.5" y1="214.97" x2="19.5" y2="214.97" stroke="#7c7c7c" stroke-width="0.8"/>
<line x1="6.5" y1="225.46499999999997" x2="19.5" y2="225.46499999999997" stroke="#7c7c7c" stroke-width="0.8"/>
<line x1="6.5" y1="235.95999999999998" x2="19.5" y2="235.95999999999998" stroke="#7c7c7c" stroke-width="0.8"/>
<line x1="6.5" y1="246.45499999999998" x2="19.5" y2="246.45499999999998" stroke="#7c7c7c" stroke-width="0.8"/>
<line x1="6.5" y1="256.95" x2="19.5" y2="256.95" stroke="#7c7c7c" stroke-width="0.8"/>
<line x1="6.5" y1="267.445" x2="19.5" y2="267.445" stroke="#7c7c7c" stroke-width="0.8"/>
<line x1="6.5" y1="277.94" x2="19.5" y2="277.94" stroke="#7c7c7c" stroke-width="0.8"/>
<line x1="6.5" y1="288.435" x2="19.5" y2="288.435" stroke="#7c7c7c" stroke-width="0.8"/>
<line x1="6.5" y1="298.92999999999995" x2="19.5" y2="298.92999999999995" stroke="#7c7c7c" stroke-width="0.8"/>
<line x1="6.5" y1="309.42499999999995" x2="19.5" y2="309.42499999999995" stroke="#7c7c7c" stroke-width="0.8"/>
<line x1="6.5" y1="319.91999999999996" x2="19.5" y2="319.91999999999996" stroke="#7c7c7c" stroke-width="0.8"/>
<line x1="6.5" y1="330.41499999999996" x2="19.5" y2="330.41499999999996" stroke="#7c7c7c" stroke-width="0.8"/>
<line x1="6.5" y1="340.90999999999997" x2="19.5" y2="340.90999999999997" stroke="#7c7c7c" stroke-width="0.8"/>
<line x1="6.5" y1="351.405" x2="19.5" y2="351.405" stroke="#7c7c7c" stroke-width="0.8"/>
<line x1="6.5" y1="361.9" x2="19.5" y2="361.9" stroke="#7c7c7c" stroke-width="0.8"/>
<line x1="6.5" y1="372.395" x2="19.5" y2="372.395" stroke="#7c7c7c" stroke-width="0.8"/>
<line x1="6.5" y1="382.89" x2="19.5" y2="382.89" stroke="#7c7c7c" stroke-width="0.8"/>
<line x1="6.5" y1="393.385" x2="19.5" y2="393.385" stroke="#7c7c7c" stroke-width="0.8"/>
<line x1="6.5" y1="403.88" x2="19.5" y2="403.88" stroke="#7c7c7c" stroke-width="0.8"/>
<line x1="6.5" y1="414.375" x2="19.5" y2="414.375" stroke="#7c7c7c" stroke-width="0.8"/>
<line x1="6.5" y1="424.87" x2="19.5" y2="424.87" stroke="#7c7c7c" stroke-width="0.8"/>
<line x1="6.5" y1="435.36499999999995" x2="19.5" y2="435.36499999999995" stroke="#7c7c7c" stroke-width="0.8"/>
<line x1="6.5" y1="445.85999999999996" x2="19.5" y2="445.85999999999996" stroke="#7c7c7c" stroke-width="0.8"/>
<line x1="6.5" y1="456.35499999999996" x2="19.5" y2="456.35499999999996" stroke="#7c7c7c" stroke-width="0.8"/>
<line x1="6.5" y1="466.84999999999997" x2="19.5" y2="466.84999999999997" stroke="#7c7c7c" stroke-width="0.8"/>
<line x1="6.5" y1="477.34499999999997" x2="19.5" y2="477.34499999999997" stroke="#7c7c7c" stroke-width="0.8"/>
<line x1="6.5" y1="487.84" x2="19.5" y2="487.84" stroke="#7c7c7c" stroke-width="0.8"/>
<line x1="6.5" y1="498.335" x2="19.5" y2="498.335" stroke="#7c7c7c" stroke-width="0.8"/>
<line x1="6.5" y1="508.83" x2="19.5" y2="508.83" stroke="#7c7c7c" stroke-width="0.8"/>
<path d="M18.2 144.1 V150.2 H12 z" fill="#d0d0d0"/>
<text x="48.05" y="149.8" font-size="6.6" fill="#dcdcdc" text-anchor="middle">A</text>
<text x="103.5" y="149.8" font-size="6.6" fill="#dcdcdc" text-anchor="middle">B</text>
<text x="147.35" y="149.8" font-size="6.6" fill="#dcdcdc" text-anchor="middle">C</text>
<text x="184.75" y="149.8" font-size="6.6" fill="#dcdcdc" text-anchor="middle">D</text>
<text x="222.05" y="149.8" font-size="6.6" fill="#dcdcdc" text-anchor="middle">E</text>
<text x="261.15" y="149.8" font-size="6.6" fill="#dcdcdc" text-anchor="middle">F</text>
<text x="300.0" y="149.8" font-size="6.6" fill="#dcdcdc" text-anchor="middle">G</text>
<text x="333.5" y="149.8" font-size="6.6" fill="#dcdcdc" text-anchor="middle">H</text>
<text x="367.25" y="149.8" font-size="6.6" fill="#dcdcdc" text-anchor="middle">I</text>
<text x="400.75" y="149.8" font-size="6.6" fill="#dcdcdc" text-anchor="middle">J</text>
<text x="434.45" y="149.8" font-size="6.6" fill="#dcdcdc" text-anchor="middle">K</text>
<text x="467.85" y="149.8" font-size="6.6" fill="#dcdcdc" text-anchor="middle">L</text>
<text x="501.29999999999995" y="149.8" font-size="6.6" fill="#dcdcdc" text-anchor="middle">M</text>
<text x="534.9" y="149.8" font-size="6.6" fill="#dcdcdc" text-anchor="middle">N</text>
<text x="568.4" y="149.8" font-size="6.6" fill="#dcdcdc" text-anchor="middle">O</text>
<text x="602.15" y="149.8" font-size="6.6" fill="#dcdcdc" text-anchor="middle">P</text>
<text x="635.65" y="149.8" font-size="6.6" fill="#dcdcdc" text-anchor="middle">Q</text>
<text x="669.3" y="149.8" font-size="6.6" fill="#dcdcdc" text-anchor="middle">R</text>
<text x="702.9" y="149.8" font-size="6.6" fill="#dcdcdc" text-anchor="middle">S</text>
<text x="736.5" y="149.8" font-size="6.6" fill="#dcdcdc" text-anchor="middle">T</text>
<text x="770.375" y="149.8" font-size="6.6" fill="#dcdcdc" text-anchor="middle">U</text>
<text x="804.125" y="149.8" font-size="6.6" fill="#dcdcdc" text-anchor="middle">V</text>
<text x="13" y="160.2" font-size="6.4" fill="#dcdcdc" text-anchor="middle">1</text>
<text x="13" y="170.695" font-size="6.4" fill="#dcdcdc" text-anchor="middle">2</text>
<text x="13" y="181.19" font-size="6.4" fill="#dcdcdc" text-anchor="middle">3</text>
<text x="13" y="191.685" font-size="6.4" fill="#dcdcdc" text-anchor="middle">4</text>
<text x="13" y="202.17999999999998" font-size="6.4" fill="#dcdcdc" text-anchor="middle">5</text>
<text x="13" y="212.67499999999998" font-size="6.4" fill="#dcdcdc" text-anchor="middle">6</text>
<text x="13" y="223.17" font-size="6.4" fill="#dcdcdc" text-anchor="middle">7</text>
<text x="13" y="233.66499999999996" font-size="6.4" fill="#dcdcdc" text-anchor="middle">8</text>
<text x="13" y="244.15999999999997" font-size="6.4" fill="#dcdcdc" text-anchor="middle">9</text>
<text x="13" y="254.65499999999997" font-size="6.4" fill="#dcdcdc" text-anchor="middle">10</text>
<text x="13" y="265.15" font-size="6.4" fill="#dcdcdc" text-anchor="middle">11</text>
<text x="13" y="275.645" font-size="6.4" fill="#dcdcdc" text-anchor="middle">12</text>
<text x="13" y="286.14" font-size="6.4" fill="#dcdcdc" text-anchor="middle">13</text>
<text x="13" y="296.635" font-size="6.4" fill="#dcdcdc" text-anchor="middle">14</text>
<text x="13" y="307.12999999999994" font-size="6.4" fill="#dcdcdc" text-anchor="middle">15</text>
<text x="13" y="317.62499999999994" font-size="6.4" fill="#dcdcdc" text-anchor="middle">16</text>
<text x="13" y="328.11999999999995" font-size="6.4" fill="#dcdcdc" text-anchor="middle">17</text>
<text x="13" y="338.61499999999995" font-size="6.4" fill="#dcdcdc" text-anchor="middle">18</text>
<text x="13" y="349.10999999999996" font-size="6.4" fill="#dcdcdc" text-anchor="middle">19</text>
<text x="13" y="359.60499999999996" font-size="6.4" fill="#dcdcdc" text-anchor="middle">20</text>
<text x="13" y="370.09999999999997" font-size="6.4" fill="#dcdcdc" text-anchor="middle">21</text>
<text x="13" y="380.59499999999997" font-size="6.4" fill="#dcdcdc" text-anchor="middle">22</text>
<text x="13" y="391.09" font-size="6.4" fill="#dcdcdc" text-anchor="middle">23</text>
<text x="13" y="401.585" font-size="6.4" fill="#dcdcdc" text-anchor="middle">24</text>
<text x="13" y="412.08" font-size="6.4" fill="#dcdcdc" text-anchor="middle">25</text>
<text x="13" y="422.575" font-size="6.4" fill="#dcdcdc" text-anchor="middle">26</text>
<text x="13" y="433.07" font-size="6.4" fill="#dcdcdc" text-anchor="middle">27</text>
<text x="13" y="443.56499999999994" font-size="6.4" fill="#dcdcdc" text-anchor="middle">28</text>
<text x="13" y="454.05999999999995" font-size="6.4" fill="#dcdcdc" text-anchor="middle">29</text>
<text x="13" y="464.55499999999995" font-size="6.4" fill="#dcdcdc" text-anchor="middle">30</text>
<text x="13" y="475.04999999999995" font-size="6.4" fill="#dcdcdc" text-anchor="middle">31</text>
<text x="13" y="485.54499999999996" font-size="6.4" fill="#dcdcdc" text-anchor="middle">32</text>
<text x="13" y="496.03999999999996" font-size="6.4" fill="#dcdcdc" text-anchor="middle">33</text>
<text x="13" y="506.53499999999997" font-size="6.4" fill="#dcdcdc" text-anchor="middle">34</text>
<text x="13" y="517.03" font-size="6.4" fill="#dcdcdc" text-anchor="middle">35</text>
<line x1="19.6" y1="172.99" x2="130.5" y2="172.99" stroke="#3a3a3a" stroke-width="0.9"/>
<line x1="19.6" y1="183.485" x2="130.5" y2="183.485" stroke="#3a3a3a" stroke-width="0.9"/>
<line x1="19.6" y1="193.98" x2="130.5" y2="193.98" stroke="#3a3a3a" stroke-width="0.9"/>
<line x1="19.6" y1="204.475" x2="130.5" y2="204.475" stroke="#3a3a3a" stroke-width="0.9"/>
<line x1="19.6" y1="214.97" x2="130.5" y2="214.97" stroke="#3a3a3a" stroke-width="0.9"/>
<line x1="19.6" y1="225.46499999999997" x2="130.5" y2="225.46499999999997" stroke="#3a3a3a" stroke-width="0.9"/>
<line x1="19.6" y1="235.95999999999998" x2="130.5" y2="235.95999999999998" stroke="#3a3a3a" stroke-width="0.9"/>
<line x1="19.6" y1="246.45499999999998" x2="130.5" y2="246.45499999999998" stroke="#3a3a3a" stroke-width="0.9"/>
<line x1="19.6" y1="256.95" x2="130.5" y2="256.95" stroke="#3a3a3a" stroke-width="0.9"/>
<line x1="19.6" y1="267.445" x2="130.5" y2="267.445" stroke="#3a3a3a" stroke-width="0.9"/>
<line x1="19.6" y1="277.94" x2="130.5" y2="277.94" stroke="#3a3a3a" stroke-width="0.9"/>
<line x1="19.6" y1="288.435" x2="130.5" y2="288.435" stroke="#3a3a3a" stroke-width="0.9"/>
<line x1="19.6" y1="298.92999999999995" x2="130.5" y2="298.92999999999995" stroke="#3a3a3a" stroke-width="0.9"/>
<line x1="19.6" y1="309.42499999999995" x2="130.5" y2="309.42499999999995" stroke="#3a3a3a" stroke-width="0.9"/>
<line x1="19.6" y1="172.99" x2="19.6" y2="309.42499999999995" stroke="#3a3a3a" stroke-width="0.9"/>
<line x1="76.5" y1="172.99" x2="76.5" y2="309.42499999999995" stroke="#3a3a3a" stroke-width="0.9"/>
<line x1="130.5" y1="172.99" x2="130.5" y2="309.42499999999995" stroke="#3a3a3a" stroke-width="0.9"/>
<text x="21.4" y="160.25" font-size="7.3" fill="#000" font-weight="bold" textLength="17.66" lengthAdjust="spacingAndGlyphs" text-anchor="start">Data:</text>
<text x="165.6" y="160.25" font-size="7.3" fill="#000" font-weight="bold" textLength="30.89" lengthAdjust="spacingAndGlyphs" text-anchor="start">Function:</text>
<text x="240.4" y="160.25" font-size="7.3" fill="#000" font-weight="bold" textLength="30.21" lengthAdjust="spacingAndGlyphs" text-anchor="start">Example:</text>
<text x="21.4" y="181.24" font-size="7.3" fill="#000" font-weight="bold" textLength="15.25" lengthAdjust="spacingAndGlyphs" text-anchor="start">Item</text>
<text x="77.8" y="181.24" font-size="7.3" fill="#000" font-weight="bold" textLength="21.8" lengthAdjust="spacingAndGlyphs" text-anchor="start">Colour</text>
<text x="165.6" y="181.24" font-size="7.3" fill="#000" textLength="33.02" lengthAdjust="spacingAndGlyphs" text-anchor="start">=CONCAT(</text>
<text x="21.4" y="191.735" font-size="7.3" fill="#000" textLength="15.94" lengthAdjust="spacingAndGlyphs" text-anchor="start">chair</text>
<text x="77.8" y="191.735" font-size="7.3" fill="#000" textLength="13.79" lengthAdjust="spacingAndGlyphs" text-anchor="start">pink</text>
<text x="21.4" y="202.23" font-size="7.3" fill="#000" textLength="14.86" lengthAdjust="spacingAndGlyphs" text-anchor="start">desk</text>
<text x="77.8" y="202.23" font-size="7.3" fill="#000" textLength="10.8" lengthAdjust="spacingAndGlyphs" text-anchor="start">red</text>
<text x="21.4" y="212.725" font-size="7.3" fill="#000" textLength="16.33" lengthAdjust="spacingAndGlyphs" text-anchor="start">table</text>
<text x="77.8" y="212.725" font-size="7.3" fill="#000" textLength="14.14" lengthAdjust="spacingAndGlyphs" text-anchor="start">blue</text>
<text x="21.4" y="223.22" font-size="7.3" fill="#000" textLength="16.16" lengthAdjust="spacingAndGlyphs" text-anchor="start">lamp</text>
<text x="77.8" y="223.22" font-size="7.3" fill="#000" textLength="18.5" lengthAdjust="spacingAndGlyphs" text-anchor="start">green</text>
<text x="21.4" y="233.71499999999997" font-size="7.3" fill="#000" textLength="15.94" lengthAdjust="spacingAndGlyphs" text-anchor="start">chair</text>
<text x="77.8" y="233.71499999999997" font-size="7.3" fill="#000" textLength="14.14" lengthAdjust="spacingAndGlyphs" text-anchor="start">blue</text>
<text x="21.4" y="244.20999999999998" font-size="7.3" fill="#000" textLength="14.86" lengthAdjust="spacingAndGlyphs" text-anchor="start">desk</text>
<text x="77.8" y="244.20999999999998" font-size="7.3" fill="#000" textLength="18.5" lengthAdjust="spacingAndGlyphs" text-anchor="start">green</text>
<text x="21.4" y="254.70499999999998" font-size="7.3" fill="#000" textLength="16.33" lengthAdjust="spacingAndGlyphs" text-anchor="start">table</text>
<text x="77.8" y="254.70499999999998" font-size="7.3" fill="#000" textLength="20.95" lengthAdjust="spacingAndGlyphs" text-anchor="start">yellow</text>
<text x="21.4" y="265.2" font-size="7.3" fill="#000" textLength="16.16" lengthAdjust="spacingAndGlyphs" text-anchor="start">lamp</text>
<text x="77.8" y="265.2" font-size="7.3" fill="#000" textLength="10.8" lengthAdjust="spacingAndGlyphs" text-anchor="start">red</text>
<text x="21.4" y="275.695" font-size="7.3" fill="#000" textLength="15.94" lengthAdjust="spacingAndGlyphs" text-anchor="start">chair</text>
<text x="77.8" y="275.695" font-size="7.3" fill="#000" textLength="20.95" lengthAdjust="spacingAndGlyphs" text-anchor="start">yellow</text>
<text x="21.4" y="286.19" font-size="7.3" fill="#000" textLength="14.86" lengthAdjust="spacingAndGlyphs" text-anchor="start">desk</text>
<text x="77.8" y="286.19" font-size="7.3" fill="#000" textLength="22.42" lengthAdjust="spacingAndGlyphs" text-anchor="start">orange</text>
<text x="21.4" y="296.685" font-size="7.3" fill="#000" textLength="16.33" lengthAdjust="spacingAndGlyphs" text-anchor="start">table</text>
<text x="77.8" y="296.685" font-size="7.3" fill="#000" textLength="20.95" lengthAdjust="spacingAndGlyphs" text-anchor="start">yellow</text>
<text x="21.4" y="307.17999999999995" font-size="7.3" fill="#000" textLength="16.16" lengthAdjust="spacingAndGlyphs" text-anchor="start">lamp</text>
<text x="77.8" y="307.17999999999995" font-size="7.3" fill="#000" textLength="21.08" lengthAdjust="spacingAndGlyphs" text-anchor="start">purple</text>
<text x="240.4" y="181.24" font-size="7.3" fill="#000" textLength="31.53" lengthAdjust="spacingAndGlyphs" text-anchor="start">pink chair</text>
<text x="240.4" y="191.735" font-size="7.3" fill="#000" textLength="27.45" lengthAdjust="spacingAndGlyphs" text-anchor="start">red desk</text>
<text x="240.4" y="202.23" font-size="7.3" fill="#000" textLength="32.26" lengthAdjust="spacingAndGlyphs" text-anchor="start">blue table</text>
<text x="240.4" y="212.725" font-size="7.3" fill="#000" textLength="36.45" lengthAdjust="spacingAndGlyphs" text-anchor="start">green lamp</text>
<text x="240.4" y="223.22" font-size="7.3" fill="#000" textLength="31.87" lengthAdjust="spacingAndGlyphs" text-anchor="start">blue chair</text>
<text x="240.4" y="233.71499999999997" font-size="7.3" fill="#000" textLength="35.15" lengthAdjust="spacingAndGlyphs" text-anchor="start">green desk</text>
<text x="240.4" y="244.20999999999998" font-size="7.3" fill="#000" textLength="39.08" lengthAdjust="spacingAndGlyphs" text-anchor="start">yellow table</text>
<text x="240.4" y="254.70499999999998" font-size="7.3" fill="#000" textLength="28.76" lengthAdjust="spacingAndGlyphs" text-anchor="start">red lamp</text>
<text x="240.4" y="265.2" font-size="7.3" fill="#000" textLength="38.69" lengthAdjust="spacingAndGlyphs" text-anchor="start">yellow chair</text>
<text x="240.4" y="275.695" font-size="7.3" fill="#000" textLength="39.07" lengthAdjust="spacingAndGlyphs" text-anchor="start">orange desk</text>
<text x="240.4" y="286.19" font-size="7.3" fill="#000" textLength="39.08" lengthAdjust="spacingAndGlyphs" text-anchor="start">yellow table</text>
<text x="240.4" y="296.685" font-size="7.3" fill="#000" textLength="39.04" lengthAdjust="spacingAndGlyphs" text-anchor="start">purple lamp</text>
<rect x="466" y="519" width="48" height="6" fill="#ffffff"/>
<path d="M6 519.5 H469.3 a2 2 0 0 1 2 2 V535.7 H6z" fill="#525252"/>
<path d="M799 519.5 H511.2 a2 2 0 0 0 -2 2 V535.7 H799z" fill="#525252"/>
<rect x="6" y="535.6" width="793" height="5" fill="#505050"/>
<line x1="6" y1="535.9" x2="799" y2="535.9" stroke="#3c3c3c" stroke-width="0.8"/>
<path d="M24.5 520.5" />
<path d="M24.6 524.4 l-2.8 2.8 l2.8 2.8" fill="none" stroke="#b0b0b0" stroke-width="0.8"/><path d="M38.6 524.4 l2.8 2.8 l-2.8 2.8" fill="none" stroke="#b0b0b0" stroke-width="0.8"/>
<circle cx="54.6" cy="527.3" r="0.75" fill="#d8d8d8"/>
<circle cx="56.6" cy="527.3" r="0.75" fill="#d8d8d8"/>
<circle cx="58.6" cy="527.3" r="0.75" fill="#d8d8d8"/>
<text x="73" y="529.8" font-size="6.3" fill="#e0e0e0" textLength="95" lengthAdjust="spacingAndGlyphs" text-anchor="start">SUMIF, COUNTIF, AVERAGEIF</text>
<text x="184" y="529.8" font-size="6.3" fill="#e0e0e0" textLength="68" lengthAdjust="spacingAndGlyphs" text-anchor="start">SUMIFS, COUNTIFS...</text>
<text x="266" y="529.8" font-size="6.3" fill="#e0e0e0" textLength="32.6" lengthAdjust="spacingAndGlyphs" text-anchor="start">VLOOKUP</text>
<text x="312.6" y="529.8" font-size="6.3" fill="#e0e0e0" textLength="33.4" lengthAdjust="spacingAndGlyphs" text-anchor="start">HLOOKUP</text>
<text x="361" y="529.8" font-size="6.3" fill="#e0e0e0" textLength="100" lengthAdjust="spacingAndGlyphs" text-anchor="start">LOWER, UPPER, TRIM, PROPER</text>
<line x1="175.5" y1="522.5" x2="175.5" y2="531" stroke="#777" stroke-width="0.7"/>
<line x1="259" y1="522.5" x2="259" y2="531" stroke="#777" stroke-width="0.7"/>
<line x1="305.5" y1="522.5" x2="305.5" y2="531" stroke="#777" stroke-width="0.7"/>
<line x1="354.5" y1="522.5" x2="354.5" y2="531" stroke="#777" stroke-width="0.7"/>
<line x1="468.6" y1="522.5" x2="468.6" y2="531" stroke="#777" stroke-width="0.7"/>
<line x1="511.6" y1="522.5" x2="511.6" y2="531" stroke="#777" stroke-width="0.7"/>
<path d="M471.3 521 h37.9 v10.8 a2 2 0 0 1 -2 2 h-33.9 a2 2 0 0 1 -2 -2z" fill="#ffffff"/>
<text x="475.8" y="528.7" font-size="7.7" fill="#262626" textLength="28.6" lengthAdjust="spacingAndGlyphs" text-anchor="start">CONCAT</text>
<rect x="475.8" y="531.2" width="29.1" height="1.5" fill="#45a06c"/>
<path d="M536.2 524 v6 M533.2 527 h6" stroke="#c0c0c0" stroke-width="0.8"/>
<circle cx="612.5" cy="525.4" r="0.55" fill="#c0c0c0"/>
<circle cx="612.5" cy="527.7" r="0.55" fill="#c0c0c0"/>
<circle cx="612.5" cy="530" r="0.55" fill="#c0c0c0"/>
<rect x="621" y="522.6" width="190" height="8.8" rx="4.4" fill="#2e2e2e"/>
<path d="M624.5 527 l2.6 -2.2 v4.4z" fill="#e0e0e0"/>
<rect x="630" y="524.8" width="180" height="4.4" rx="2.2" fill="#d4d4d4"/>
<rect x="40.5" y="538.3" width="5" height="3" rx="1" fill="#a0a0a0"/>
<text x="49" y="543.6" font-size="6.3" fill="#c8c8c8" textLength="70" lengthAdjust="spacingAndGlyphs" text-anchor="start">Accessibility: Good to go</text>
</svg></body></html>
